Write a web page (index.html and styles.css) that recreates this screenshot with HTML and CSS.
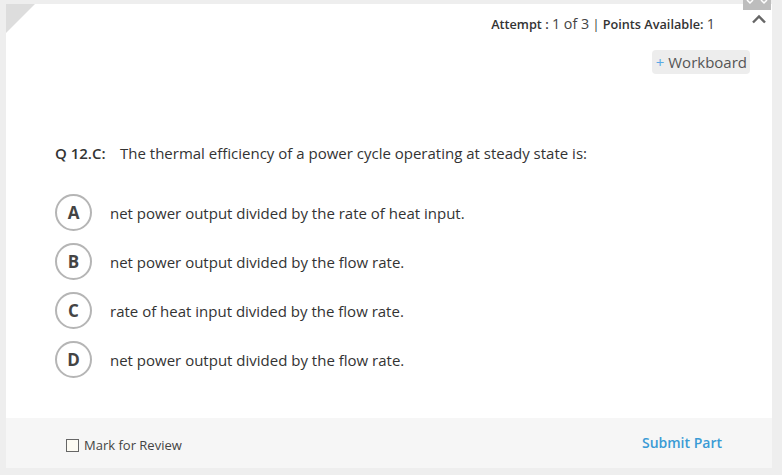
FILE: index.html
```html
<!DOCTYPE html>
<html>
<head>
<meta charset="utf-8">
<link rel="stylesheet" href="styles.css">
</head>
<body>
<div class="tab"><svg width="28" height="10" viewBox="0 0 28 10"><path d="M4 0 L7 3 L10 0 M18 0 L21 3 L24 0" fill="none" stroke="#fff" stroke-width="1.5"/></svg></div>
<div class="card">
  <div class="corner"></div>
  <svg class="chevron" width="16" height="10" viewBox="0 0 16 10"><path d="M2 8.5 L8 2.5 L14 8.5" fill="none" stroke="#666" stroke-width="2.4"/></svg>
  <div class="main">
    <div class="attempt"><b>Attempt :</b> <span class="num">1 of 3</span> | <b>Points Available:</b> <span class="num">1</span></div>
    <div class="wb-row"><button class="workboard"><span class="plus">+</span> Workboard</button></div>
    <div class="question"><span class="qnum">Q 12.C:</span><span class="qtext">The thermal efficiency of a power cycle operating at steady state is:</span></div>
    <div class="options">
      <div class="option"><span class="letter">A</span><span class="otext">net power output divided by the rate of heat input.</span></div>
      <div class="option"><span class="letter">B</span><span class="otext">net power output divided by the flow rate.</span></div>
      <div class="option"><span class="letter">C</span><span class="otext">rate of heat input divided by the flow rate.</span></div>
      <div class="option"><span class="letter">D</span><span class="otext">net power output divided by the flow rate.</span></div>
    </div>
  </div>
  <div class="footer">
    <label class="review"><span class="box"></span>Mark for Review</label>
    <span class="submit">Submit Part</span>
  </div>
</div>
</body>
</html>
```
FILE: styles.css
```css
html, body {
  margin: 0;
  padding: 0;
}
body {
  background: #eeeeee;
  font-family: "Open Sans", "Noto Sans", sans-serif;
  color: #333;
  width: 782px;
  height: 475px;
  overflow: hidden;
  position: relative;
}
.tab {
  position: absolute;
  left: 743px;
  top: 0;
  width: 28px;
  height: 10px;
  background: #bdbdbd;
  z-index: 2;
}
.tab svg {
  display: block;
}
.card {
  position: relative;
  margin: 4px 0 0 6px;
  width: 766px;
  height: 464px;
  background: #fff;
  display: flex;
  flex-direction: column;
}
.corner {
  position: absolute;
  left: 0;
  top: 0;
  width: 0;
  height: 0;
  border-top: 29px solid #dddddd;
  border-right: 29px solid transparent;
}
.chevron {
  position: absolute;
  left: 745px;
  top: 10px;
}
.main {
  flex: 1;
  padding: 11px 22px 0 49px;
}
.attempt {
  text-align: right;
  font-size: 12.7px;
  line-height: 17px;
  color: #333;
  margin-right: 35px;
}
.attempt b {
  font-weight: 600;
}
.attempt .num {
  font-size: 14.3px;
  color: #444;
}
.wb-row {
  display: flex;
  justify-content: flex-end;
  margin-top: 17px;
}
.workboard {
  font-family: inherit;
  font-size: 15px;
  color: #555;
  background: #ededed;
  border: none;
  border-radius: 4px;
  height: 24px;
  padding: 0 3px 0 4px;
  line-height: 24px;
}
.workboard .plus {
  color: #5aa9e6;
}
.question {
  margin-top: 69px;
  font-size: 15px;
  line-height: 20px;
  display: flex;
}
.qnum {
  font-weight: 600;
  width: 65px;
  color: #333;
}
.qtext {
  color: #333;
}
.options {
  margin-top: 31px;
  display: flex;
  flex-direction: column;
  gap: 12px;
}
.option {
  display: flex;
  align-items: center;
  height: 37px;
}
.letter {
  box-sizing: border-box;
  width: 37px;
  height: 37px;
  border: 2px solid #b5b5b5;
  border-radius: 50%;
  display: flex;
  align-items: center;
  justify-content: center;
  font-weight: 700;
  font-size: 17px;
  color: #444;
}
.otext {
  margin-left: 18px;
  font-size: 15px;
  color: #333;
}
.footer {
  height: 50px;
  background: #f6f6f6;
  display: flex;
  align-items: center;
  justify-content: space-between;
  padding: 0 50px 0 60px;
  margin-bottom: 0;
}
.review {
  display: flex;
  align-items: center;
  font-size: 13px;
  color: #444;
  margin-top: 4px;
}
.box {
  box-sizing: border-box;
  width: 13px;
  height: 13px;
  border: 1px solid #666;
  background: #fdfbf3;
  margin-right: 5px;
}
.submit {
  color: #3a9bd5;
  font-weight: 600;
  font-size: 14px;
  margin-top: -2px;
}
```
